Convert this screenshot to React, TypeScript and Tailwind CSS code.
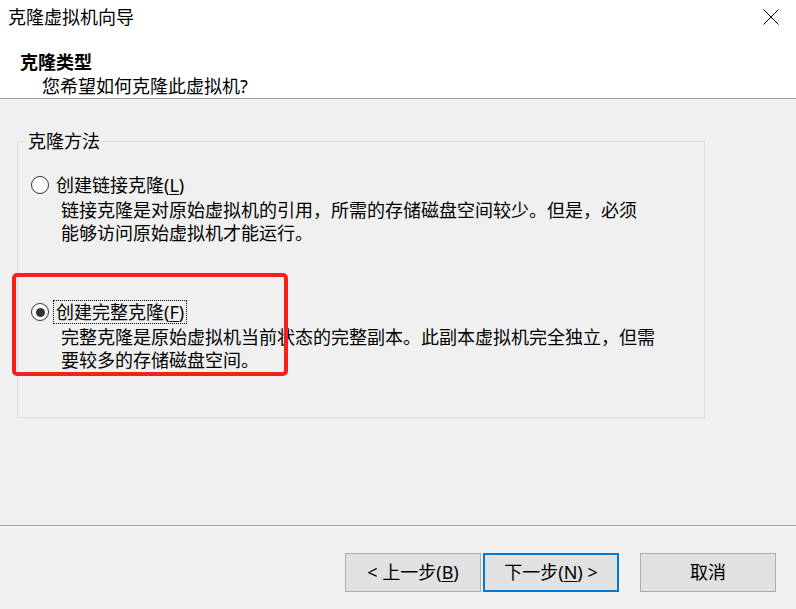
import React from "react";

const FONT = {
  fontFamily: '"Noto Sans", "Noto Sans CJK SC", sans-serif',
};

function Radio({ checked }: { checked?: boolean }) {
  return (
    <span className="ml-[13px] flex h-[18px] w-[18px] shrink-0 items-center justify-center rounded-full border-[1.5px] border-[#333333] bg-white">
      {checked && <span className="h-[9px] w-[9px] rounded-full bg-[#333333]" />}
    </span>
  );
}

function Option({
  label,
  mnemonic,
  focused,
  checked,
  lines,
  className,
}: {
  label: string;
  mnemonic: string;
  focused?: boolean;
  checked?: boolean;
  lines: string[];
  className?: string;
}) {
  return (
    <div className={className}>
      <div className="flex items-center">
        <Radio checked={checked} />
        <span
          className={
            "ml-[4px] border px-[2px] leading-[22px] " +
            (focused ? "border-dotted border-black" : "border-transparent")
          }
        >
          {label}(<span className="underline underline-offset-2">{mnemonic}</span>)
        </span>
      </div>
      <p className="mt-[2px] pl-[43px] leading-[23px]">
        {lines.map((l, i) => (
          <React.Fragment key={i}>
            {l}
            {i < lines.length - 1 && <br />}
          </React.Fragment>
        ))}
      </p>
    </div>
  );
}

function WizardButton({
  children,
  primary,
  className,
}: {
  children: React.ReactNode;
  primary?: boolean;
  className?: string;
}) {
  return (
    <button
      className={
        "flex h-[39px] w-[136px] items-center justify-center bg-[#e1e1e1] text-[18px] text-black " +
        (primary ? "border-2 border-[#0078d7] " : "border border-[#adadad] ") +
        (className ?? "")
      }
    >
      {children}
    </button>
  );
}

export default function App() {
  return (
    <div
      style={FONT}
      className="relative flex h-[609px] w-[796px] flex-col overflow-hidden bg-[#f0f0f0] text-[18px] text-black"
    >
      {/* Header */}
      <div className="h-[99px] shrink-0 border-b border-[#a0a0a0] bg-white">
        <div className="flex h-[34px] items-center justify-between pl-2 pr-[17px]">
          <span className="leading-[24px]">克隆虚拟机向导</span>
          <svg width="16" height="16" viewBox="0 0 16 16" className="shrink-0">
            <path d="M0.5 0.5 L15.5 15.5 M15.5 0.5 L0.5 15.5" stroke="#000" strokeWidth="1" fill="none" />
          </svg>
        </div>
        <div className="mt-[16px] pl-5 font-bold leading-[24px]">克隆类型</div>
        <div className="pl-[42px] leading-[24px]">您希望如何克隆此虚拟机?</div>
      </div>

      {/* Body */}
      <div className="flex-1">
        <fieldset className="mx-[17px] mt-[30px] h-[289px] w-[688px] border border-[#dcdcdc]">
          <legend className="ml-[8px] px-[2px] leading-[24px]">克隆方法</legend>
          <Option
            className="pt-[20px]"
            label="创建链接克隆"
            mnemonic="L"
            lines={[
              "链接克隆是对原始虚拟机的引用，所需的存储磁盘空间较少。但是，必须",
              "能够访问原始虚拟机才能运行。",
            ]}
          />
          <Option
            className="mt-[55px]"
            label="创建完整克隆"
            mnemonic="F"
            focused
            checked
            lines={[
              "完整克隆是原始虚拟机当前状态的完整副本。此副本虚拟机完全独立，但需",
              "要较多的存储磁盘空间。",
            ]}
          />
        </fieldset>
      </div>

      {/* Footer */}
      <div className="flex h-[84px] shrink-0 items-start justify-end border-t border-[#a0a0a0] pr-[20px] pt-[27px] shadow-[inset_0_1px_0_#ffffff]">
        <WizardButton>
          &lt; 上一步(<span className="underline underline-offset-2">B</span>)
        </WizardButton>
        <WizardButton primary className="ml-[2px]">
          下一步(<span className="underline underline-offset-2">N</span>) &gt;
        </WizardButton>
        <WizardButton className="ml-[21px]">取消</WizardButton>
      </div>

      {/* Red annotation box */}
      <div className="pointer-events-none absolute left-[12px] top-[273px] h-[103px] w-[276px] rounded-[5px] border-4 border-[#f5201a]" />
    </div>
  );
}
